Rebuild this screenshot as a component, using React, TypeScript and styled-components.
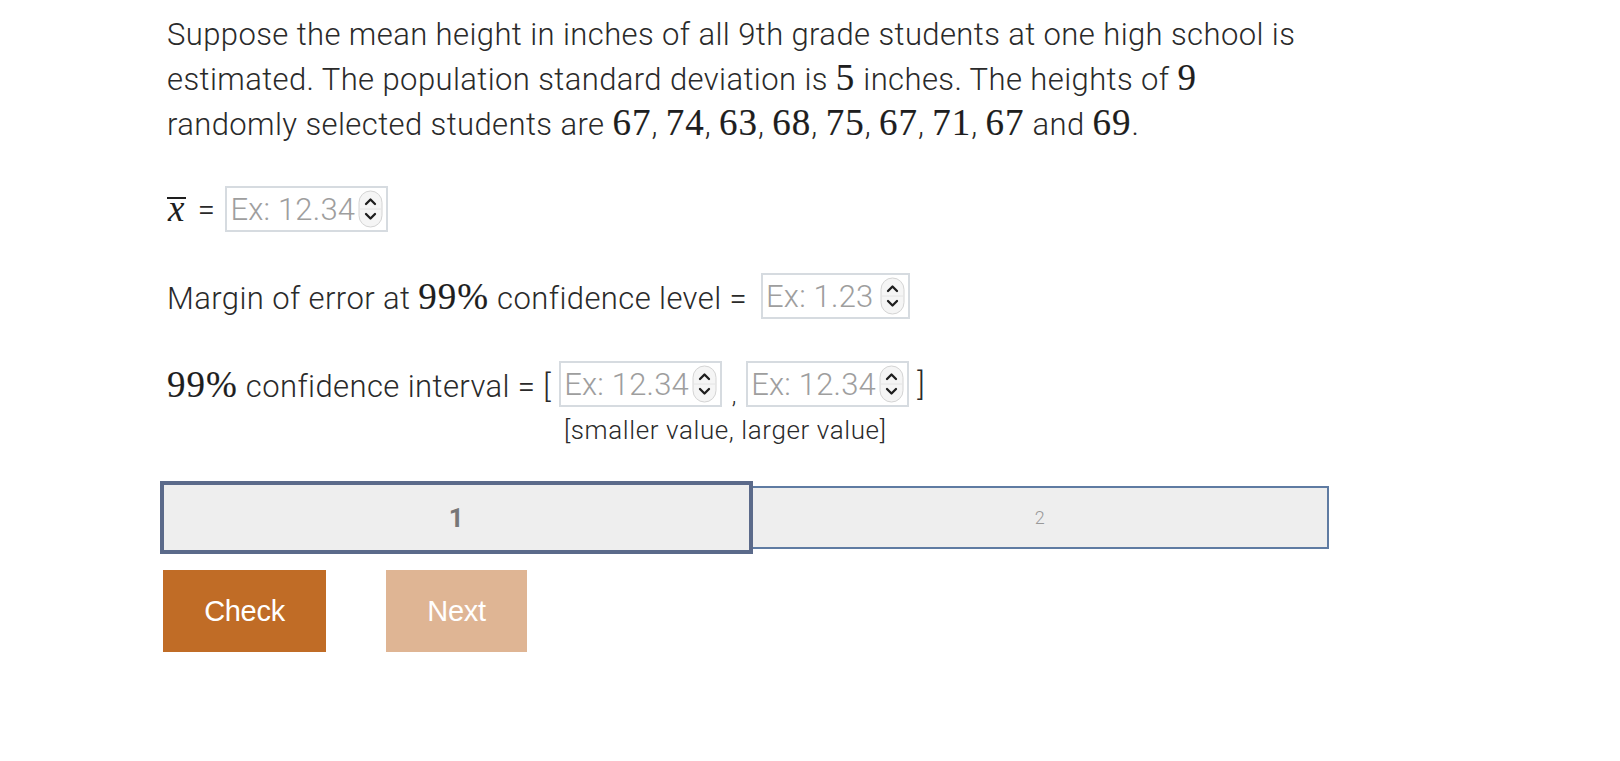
import styled, { createGlobalStyle } from 'styled-components'

const GlobalStyle = createGlobalStyle`
  body {
    margin: 0;
    background: #fff;
    font-family: Roboto, "Liberation Sans", sans-serif;
  }
`

const Stepper = () => (
  <svg width="25" height="38" viewBox="0 0 25 38">
    <rect x="1" y="1" width="23" height="36" rx="11.5" fill="#f5f5f5" stroke="#d4d4d4" />
    <line x1="2" y1="19" x2="23" y2="19" stroke="#e4e4e4" />
    <path d="M8 14 L12.5 9.5 L17 14" fill="none" stroke="#1e1e1e" strokeWidth="2.3" strokeLinecap="round" strokeLinejoin="round" />
    <path d="M8 24 L12.5 28.5 L17 24" fill="none" stroke="#1e1e1e" strokeWidth="2.3" strokeLinecap="round" strokeLinejoin="round" />
  </svg>
)

const NumberBox = ({ placeholder, width }: { placeholder: string; width: number }) => (
  <InputWrap>
    <Field type="number" placeholder={placeholder} $w={width} />
    <Stepper />
  </InputWrap>
)

const App = () => (
  <Page>
    <GlobalStyle />
    <Question>
      Suppose the mean height in inches of all 9th grade students at one high school is
      <br />
      estimated. The population standard deviation is <M>5</M> inches. The heights of <M>9</M>
      <br />
      randomly selected students are <M>67</M>, <M>74</M>, <M>63</M>, <M>68</M>, <M>75</M>,{' '}
      <M>67</M>, <M>71</M>, <M>67</M> and <M>69</M>.
    </Question>

    <Row $top={40}>
      <Xbar>x</Xbar>
      <Eq>=</Eq>
      <NumberBox placeholder="Ex: 12.34" width={128} />
    </Row>

    <Row $top={41}>
      <span>
        Margin of error at <M>99%</M> confidence level =
      </span>
      <Spacer $w={14} />
      <NumberBox placeholder="Ex: 1.23" width={114} />
    </Row>

    <IntervalBlock>
      <Row $top={0}>
        <span>
          <M>99%</M> confidence interval = [
        </span>
        <Spacer $w={8} />
        <NumberBox placeholder="Ex: 12.34" width={128} />
        <Comma>,</Comma>
        <NumberBox placeholder="Ex: 12.34" width={128} />
        <Close>]</Close>
      </Row>
      <Hint>[smaller value, larger value]</Hint>
    </IntervalBlock>

    <Tabs>
      <Tab $active>1</Tab>
      <Tab>2</Tab>
    </Tabs>

    <Buttons>
      <Button $bg="#c06c26" $w={163}>Check</Button>
      <Button $bg="#dfb594" $w={141}>Next</Button>
    </Buttons>
  </Page>
)

export default App

const Page = styled.div`
  padding: 13px 0 0 167px;
  color: #2a2a2a;
  font-size: 31px;
  font-weight: 300;
  letter-spacing: 0.4px;
`

const Question = styled.p`
  margin: 0;
  line-height: 43px;
  white-space: nowrap;
`

const M = styled.span`
  font-family: "Liberation Serif", "DejaVu Serif", serif;
  font-size: 37px;
  font-weight: 400;
  letter-spacing: 1px;
  color: #1e1e1e;
  -webkit-text-stroke: 0.15px #1e1e1e;
`

const Row = styled.div<{ $top: number }>`
  display: flex;
  align-items: center;
  height: 46px;
  margin-top: ${({ $top }) => $top}px;
  white-space: nowrap;
`

const Xbar = styled.span`
  display: inline-block;
  font-family: "Liberation Serif", "DejaVu Serif", serif;
  font-style: italic;
  font-size: 37px;
  line-height: 19px;
  color: #1e1e1e;
  border-top: 2px solid #1e1e1e;
  margin-top: -3px;
  padding: 0 1px;
`

const Eq = styled.span`
  margin: 0 10px 0 12px;
`

const Spacer = styled.span<{ $w: number }>`
  width: ${({ $w }) => $w}px;
`

const InputWrap = styled.div`
  display: flex;
  align-items: center;
  box-sizing: border-box;
  height: 46px;
  border: 2px solid #d6dbe0;
  padding: 0 3px 0 3px;
  background: #fff;
`

const Field = styled.input<{ $w: number }>`
  width: ${({ $w }) => $w}px;
  border: none;
  outline: none;
  padding: 0;
  font-family: Roboto, "Liberation Sans", sans-serif;
  font-size: 31px;
  font-weight: 300;
  letter-spacing: 0.2px;
  color: #333;
  background: transparent;
  &::placeholder {
    color: #9e9e9e;
  }
  &::-webkit-inner-spin-button,
  &::-webkit-outer-spin-button {
    -webkit-appearance: none;
    margin: 0;
  }
`

const Comma = styled.span`
  width: 24px;
  text-align: center;
  line-height: 1;
  font-size: 24px;
  transform: translateY(11px);
`

const Close = styled.span`
  margin-left: 8px;
`

const IntervalBlock = styled.div`
  display: flex;
  flex-direction: column;
  margin-top: 42px;
`

const Hint = styled.div`
  margin: 7px 0 0 397px;
  font-size: 26px;
  font-weight: 300;
  letter-spacing: 0.6px;
  color: #2a2a2a;
  line-height: 32px;
`

const Tabs = styled.div`
  display: flex;
  align-items: center;
  width: 1169px;
  margin: 35px 0 0 -7px;
`

const Tab = styled.div<{ $active?: boolean }>`
  box-sizing: border-box;
  flex: ${({ $active }) => ($active ? '0 0 593px' : '1')};
  height: ${({ $active }) => ($active ? '73px' : '63px')};
  display: flex;
  align-items: center;
  justify-content: center;
  background: #eeeeee;
  border: ${({ $active }) => ($active ? '4px solid #5b6a8a' : '2px solid #5f7ba2')};
  border-left: ${({ $active }) => ($active ? '4px solid #5b6a8a' : 'none')};
  font-size: ${({ $active }) => ($active ? '26px' : '18px')};
  font-weight: ${({ $active }) => ($active ? 700 : 300)};
  color: ${({ $active }) => ($active ? '#777' : '#999')};
`

const Buttons = styled.div`
  display: flex;
  gap: 60px;
  margin: 16px 0 0 -4px;
`

const Button = styled.button<{ $bg: string; $w: number }>`
  width: ${({ $w }) => $w}px;
  height: 82px;
  border: none;
  background: ${({ $bg }) => $bg};
  color: #fff;
  font-family: "Liberation Sans", Arial, sans-serif;
  font-size: 29px;
  letter-spacing: -0.3px;
  cursor: pointer;
`
